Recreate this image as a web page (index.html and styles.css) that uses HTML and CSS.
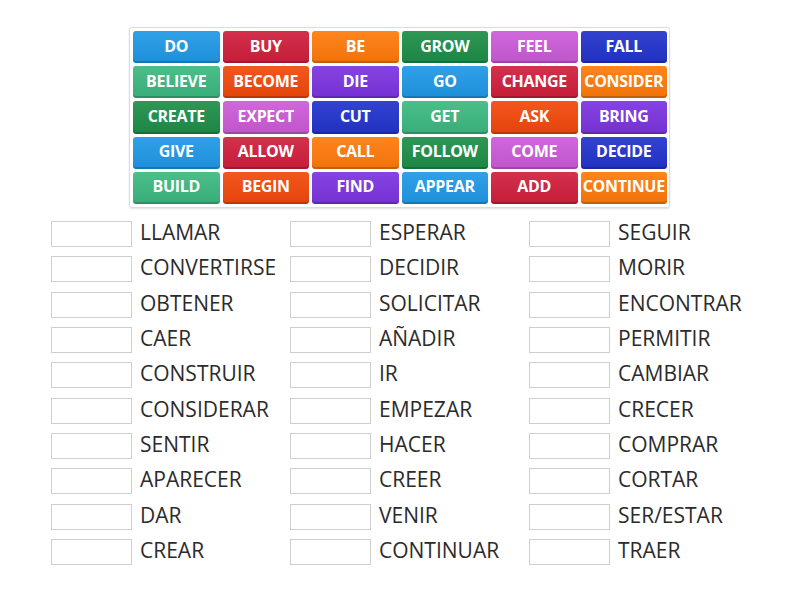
FILE: index.html
```html
<!DOCTYPE html>
<html>
<head>
<meta charset="utf-8">
<link rel="stylesheet" href="styles.css">
</head>
<body>
<div class="page">
  <div class="tiles">
    <div class="tile c1">DO</div>
    <div class="tile c2">BUY</div>
    <div class="tile c3">BE</div>
    <div class="tile c4">GROW</div>
    <div class="tile c5">FEEL</div>
    <div class="tile c6">FALL</div>
    <div class="tile c7">BELIEVE</div>
    <div class="tile c8">BECOME</div>
    <div class="tile c9">DIE</div>
    <div class="tile c1">GO</div>
    <div class="tile c2">CHANGE</div>
    <div class="tile c3">CONSIDER</div>
    <div class="tile c4">CREATE</div>
    <div class="tile c5">EXPECT</div>
    <div class="tile c6">CUT</div>
    <div class="tile c7">GET</div>
    <div class="tile c8">ASK</div>
    <div class="tile c9">BRING</div>
    <div class="tile c1">GIVE</div>
    <div class="tile c2">ALLOW</div>
    <div class="tile c3">CALL</div>
    <div class="tile c4">FOLLOW</div>
    <div class="tile c5">COME</div>
    <div class="tile c6">DECIDE</div>
    <div class="tile c7">BUILD</div>
    <div class="tile c8">BEGIN</div>
    <div class="tile c9">FIND</div>
    <div class="tile c1">APPEAR</div>
    <div class="tile c2">ADD</div>
    <div class="tile c3">CONTINUE</div>
  </div>
  <div class="answers">
    <div class="item"><span class="box"></span><span class="word">LLAMAR</span></div>
    <div class="item"><span class="box"></span><span class="word">ESPERAR</span></div>
    <div class="item"><span class="box"></span><span class="word">SEGUIR</span></div>
    <div class="item"><span class="box"></span><span class="word">CONVERTIRSE</span></div>
    <div class="item"><span class="box"></span><span class="word">DECIDIR</span></div>
    <div class="item"><span class="box"></span><span class="word">MORIR</span></div>
    <div class="item"><span class="box"></span><span class="word">OBTENER</span></div>
    <div class="item"><span class="box"></span><span class="word">SOLICITAR</span></div>
    <div class="item"><span class="box"></span><span class="word">ENCONTRAR</span></div>
    <div class="item"><span class="box"></span><span class="word">CAER</span></div>
    <div class="item"><span class="box"></span><span class="word">AÑADIR</span></div>
    <div class="item"><span class="box"></span><span class="word">PERMITIR</span></div>
    <div class="item"><span class="box"></span><span class="word">CONSTRUIR</span></div>
    <div class="item"><span class="box"></span><span class="word">IR</span></div>
    <div class="item"><span class="box"></span><span class="word">CAMBIAR</span></div>
    <div class="item"><span class="box"></span><span class="word">CONSIDERAR</span></div>
    <div class="item"><span class="box"></span><span class="word">EMPEZAR</span></div>
    <div class="item"><span class="box"></span><span class="word">CRECER</span></div>
    <div class="item"><span class="box"></span><span class="word">SENTIR</span></div>
    <div class="item"><span class="box"></span><span class="word">HACER</span></div>
    <div class="item"><span class="box"></span><span class="word">COMPRAR</span></div>
    <div class="item"><span class="box"></span><span class="word">APARECER</span></div>
    <div class="item"><span class="box"></span><span class="word">CREER</span></div>
    <div class="item"><span class="box"></span><span class="word">CORTAR</span></div>
    <div class="item"><span class="box"></span><span class="word">DAR</span></div>
    <div class="item"><span class="box"></span><span class="word">VENIR</span></div>
    <div class="item"><span class="box"></span><span class="word">SER/ESTAR</span></div>
    <div class="item"><span class="box"></span><span class="word">CREAR</span></div>
    <div class="item"><span class="box"></span><span class="word">CONTINUAR</span></div>
    <div class="item"><span class="box"></span><span class="word">TRAER</span></div>
  </div>
</div>
</body>
</html>
```

FILE: styles.css
```css
html, body {
  margin: 0;
  padding: 0;
  background: #ffffff;
  font-family: "Open Sans", "Noto Sans", sans-serif;
}

.page {
  padding-top: 27px;
}

.tiles {
  margin-left: 129px;
  width: 541px;
  height: 181px;
  box-sizing: border-box;
  border: 1px solid #dcdcdc;
  border-radius: 3px;
  box-shadow: 0 1px 2px rgba(0,0,0,0.12);
  padding: 3px;
  display: grid;
  grid-template-columns: repeat(6, 86.5px);
  grid-template-rows: repeat(5, 32.2px);
  gap: 3px;
}

.tile {
  display: flex;
  align-items: center;
  justify-content: center;
  box-sizing: border-box;
  padding-bottom: 3px;
  color: #ffffff;
  font-weight: 700;
  font-size: 16px;
  letter-spacing: -0.3px;
  border-radius: 3px;
  background-image: linear-gradient(to bottom, rgba(255,255,255,0.08), rgba(0,0,0,0.06));
  box-shadow: inset 0 -2px 0 rgba(0,0,0,0.18);
  white-space: nowrap;
  overflow: hidden;
}

.c1 { background-color: #1f98e6; }
.c2 { background-color: #d01f3c; }
.c3 { background-color: #ff7a0a; }
.c4 { background-color: #1e8e48; }
.c5 { background-color: #cc5ad8; }
.c6 { background-color: #2233cc; }
.c7 { background-color: #3cb880; }
.c8 { background-color: #f2480b; }
.c9 { background-color: #7c33e0; }

.answers {
  margin-top: 13px;
  margin-left: 51px;
  display: grid;
  grid-template-columns: repeat(3, 239px);
  row-gap: 9.33px;
}

.item {
  display: flex;
  align-items: center;
  height: 26px;
}

.box {
  width: 81px;
  height: 26px;
  box-sizing: border-box;
  border: 1px solid #cfcfcf;
  background: #ffffff;
  margin-right: 8px;
  flex: none;
}

.word {
  font-size: 21px;
  line-height: 26px;
  margin-bottom: 4px;
  color: #2b2b2b;
  white-space: nowrap;
}
```
